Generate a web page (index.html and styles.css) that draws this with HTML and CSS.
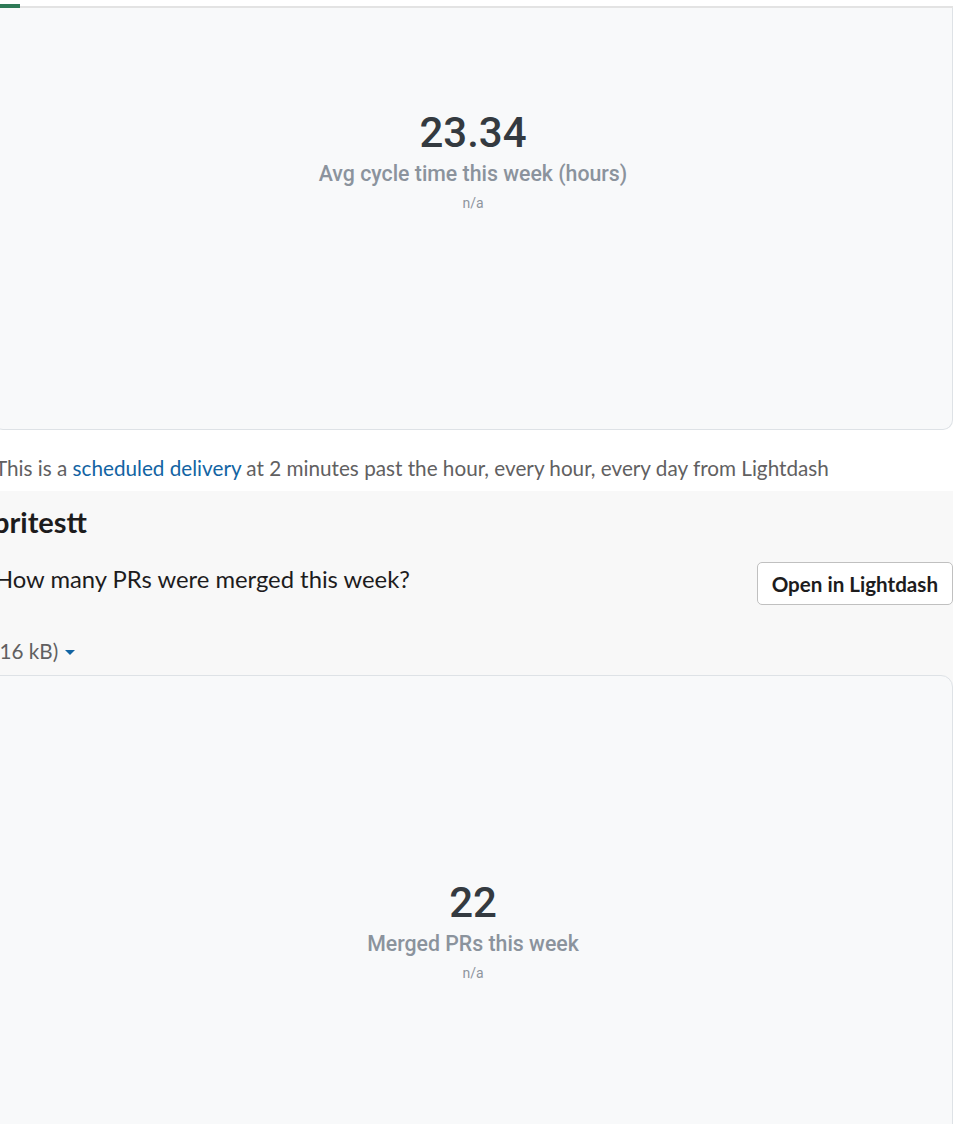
FILE: index.html
```html
<!DOCTYPE html>
<html>
<head>
<meta charset="utf-8">
<link rel="stylesheet" href="styles.css">
</head>
<body>
<div class="page">
  <div class="tabs"><div class="tab-active"></div></div>
  <div class="chart-card card-top">
    <div class="bignum">23.34</div>
    <div class="bn-label">Avg cycle time this week (hours)</div>
    <div class="bn-sub">n/a</div>
  </div>
  <p class="msg">This is a <a class="link" href="#">scheduled delivery</a> at 2 minutes past the hour, every hour, every day from Lightdash</p>
  <div class="attachment">
    <div class="att-title">pritestt</div>
    <div class="att-row">
      <div class="att-question">How many PRs were merged this week?</div>
      <button class="att-button">Open in Lightdash</button>
    </div>
    <div class="file-meta">(16 kB)<span class="caret"></span></div>
    <div class="chart-card card-bottom">
      <div class="bignum">22</div>
      <div class="bn-label">Merged PRs this week</div>
      <div class="bn-sub">n/a</div>
    </div>
  </div>
</div>
</body>
</html>
```

FILE: styles.css
```css
html, body {
  margin: 0;
  padding: 0;
  background: #ffffff;
  overflow: hidden;
  font-family: "Lato", "Liberation Sans", sans-serif;
}

.page {
  width: 960px;
  margin-left: -7px;
}

.tabs {
  display: flex;
  align-items: flex-end;
  height: 6px;
  border-bottom: 2px solid #e3e3e3;
}

.tab-active {
  width: 27px;
  height: 4px;
  margin-bottom: -2px;
  background: #2f7a57;
}

.chart-card {
  box-sizing: border-box;
  background: #f8f9fa;
  border: 1px solid #dee2e6;
  font-family: "Roboto", "Liberation Sans", sans-serif;
  text-align: center;
}

.card-top {
  border-top: none;
  height: 422px;
  border-radius: 0 0 10px 10px;
  padding-top: 100px;
}

.card-bottom {
  height: 520px;
  border-radius: 0 12px 0 0;
  padding-top: 202px;
}

.bignum {
  font-size: 42px;
  font-weight: 500;
  line-height: 50px;
  color: #343a40;
}

.bn-label {
  font-size: 21.3px;
  font-weight: 500;
  line-height: 31px;
  color: #8b939d;
}

.bn-sub {
  font-size: 14px;
  line-height: 22px;
  margin-top: 3px;
  color: #8e959d;
}

.msg {
  margin: 0;
  padding: 24px 0 9px 2px;
  font-size: 20.7px;
  line-height: 28px;
  color: #616061;
}

.link {
  color: #1264a3;
  text-decoration: none;
}

.attachment {
  background: #f8f8f8;
  padding-top: 14px;
}

.att-title {
  padding-left: 0;
  font-size: 29px;
  font-weight: 700;
  line-height: 34px;
  color: #1d1c1d;
}

.att-row {
  display: flex;
  justify-content: space-between;
  align-items: flex-start;
  margin-top: 23px;
}

.att-question {
  margin-top: 2px;
  padding-left: 2px;
  font-size: 23.8px;
  line-height: 30px;
  color: #1d1c1d;
}

.att-button {
  box-sizing: border-box;
  height: 43px;
  padding: 0 14px;
  background: #ffffff;
  border: 1px solid #c0c0c0;
  border-radius: 5px;
  font-family: "Lato", "Liberation Sans", sans-serif;
  font-size: 20.6px;
  font-weight: 700;
  color: #1d1c1d;
}

.file-meta {
  margin-top: 32px;
  margin-bottom: 10px;
  padding-left: 1px;
  font-size: 20.7px;
  line-height: 28px;
  color: #616061;
}

.caret {
  display: inline-block;
  width: 0;
  height: 0;
  margin-left: 7px;
  vertical-align: 4px;
  border-left: 5.5px solid transparent;
  border-right: 5.5px solid transparent;
  border-top: 5px solid #1264a3;
}
```
